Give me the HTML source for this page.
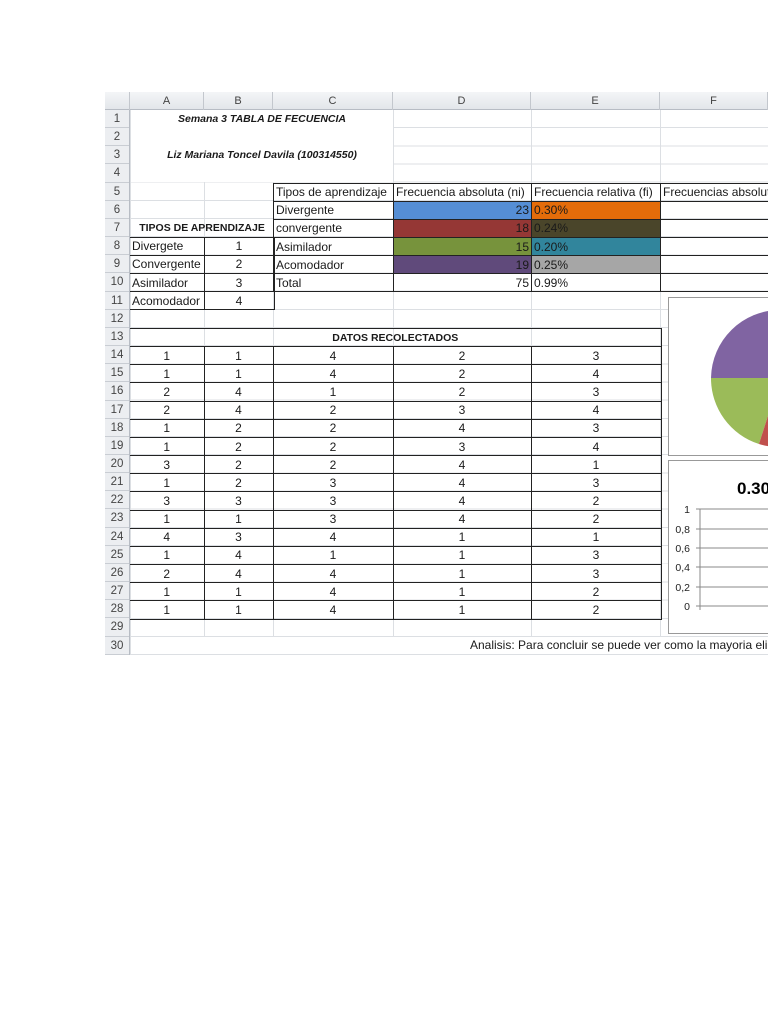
<!DOCTYPE html>
<html><head><meta charset="utf-8"><style>
*{margin:0;padding:0;box-sizing:border-box}
body{width:768px;height:1024px;background:#fff;position:relative;overflow:hidden;font-family:"Liberation Sans",sans-serif;font-size:12px;color:#1a1a1a}
.abs{position:absolute}
#sheet{position:absolute;left:105px;top:92px;width:663px;height:563px;overflow:hidden;
background:
repeating-linear-gradient(to bottom,transparent 0,transparent 17.17px,#dcdfe3 17.17px,#dcdfe3 18.17px) 0 18px/100% 545px no-repeat,#fff}
.vl{position:absolute;top:0;width:1px;height:563px;background:#dcdfe3}
#hdr{position:absolute;left:0;top:0;width:663px;height:18px;background:linear-gradient(#f4f5f7,#e3e6ea);border-bottom:1px solid #b7bcc4;font-size:11px}
#hdr div{position:absolute;top:0;height:18px;line-height:18px;text-align:center;color:#444;border-right:1px solid #c3c7cd}
#rh{position:absolute;left:0;top:18px;width:25px;background:#eceef1;border-right:1px solid #b7bcc4}
#rh div{height:18.17px;line-height:18px;text-align:center;color:#444;border-bottom:1px solid #c9cdd3;font-size:11.5px}
.t{position:absolute;height:18.17px;line-height:18px;white-space:nowrap}
table{border-collapse:collapse;table-layout:fixed;position:absolute}
td{height:18.17px;padding:0 2px;border:1px solid #222;white-space:nowrap;line-height:16px;overflow:hidden}
.c{text-align:center}.r{text-align:right}.b{font-weight:bold;font-size:10.5px}
</style></head><body>
<div id="sheet">
<div class="vl" style="left:25px"></div><div class="vl" style="left:99px"></div><div class="vl" style="left:168px"></div><div class="vl" style="left:288px"></div><div class="vl" style="left:426px"></div><div class="vl" style="left:555px"></div>
<div id="hdr">
<div style="left:0;width:25px"></div><div style="left:25px;width:74px">A</div><div style="left:99px;width:69px">B</div><div style="left:168px;width:120px">C</div><div style="left:288px;width:138px">D</div><div style="left:426px;width:129px">E</div><div style="left:555px;width:108px">F</div>
</div>
<div id="rh"><div>1</div><div>2</div><div>3</div><div>4</div><div>5</div><div>6</div><div>7</div><div>8</div><div>9</div><div>10</div><div>11</div><div>12</div><div>13</div><div>14</div><div>15</div><div>16</div><div>17</div><div>18</div><div>19</div><div>20</div><div>21</div><div>22</div><div>23</div><div>24</div><div>25</div><div>26</div><div>27</div><div>28</div><div>29</div><div>30</div></div>
<div class="abs" style="left:26px;top:18px;width:262px;height:72px;background:#fff"></div>
<div class="t b" style="left:26px;top:18px;width:262px;text-align:center;font-style:italic">Semana 3 TABLA DE FECUENCIA</div>
<div class="t b" style="left:26px;top:54px;width:262px;text-align:center;font-style:italic">Liz Mariana Toncel Davila (100314550)</div>

<table style="left:168px;top:90.5px;width:496px">
<colgroup><col style="width:120px"><col style="width:138px"><col style="width:129px"><col style="width:109px"></colgroup>
<tr><td>Tipos de aprendizaje</td><td>Frecuencia absoluta (ni)</td><td>Frecuencia relativa (fi)</td><td>Frecuencias absolut</td></tr>
<tr><td>Divergente</td><td class="r" style="background:#558ed5">23</td><td style="background:#e46c0a">0.30%</td><td></td></tr>
<tr><td>convergente</td><td class="r" style="background:#953735">18</td><td style="background:#4a452a">0.24%</td><td></td></tr>
<tr><td>Asimilador</td><td class="r" style="background:#77933c">15</td><td style="background:#31859c">0.20%</td><td></td></tr>
<tr><td>Acomodador</td><td class="r" style="background:#604a7b">19</td><td style="background:#a6a6a6">0.25%</td><td></td></tr>
<tr><td>Total</td><td class="r">75</td><td>0.99%</td><td></td></tr>
</table>

<table style="left:25px;top:127px;width:144px">
<colgroup><col style="width:74px"><col style="width:70px"></colgroup>
<tr><td colspan="2" class="c b" style="border-left:none;border-right:none;border-top:none">TIPOS DE APRENDIZAJE</td></tr>
<tr><td style="border-left:none">Divergete</td><td class="c">1</td></tr>
<tr><td style="border-left:none">Convergente</td><td class="c">2</td></tr>
<tr><td style="border-left:none">Asimilador</td><td class="c">3</td></tr>
<tr><td style="border-left:none">Acomodador</td><td class="c">4</td></tr>
</table>

<table style="left:25px;top:236px;width:531px">
<colgroup><col style="width:74px"><col style="width:69px"><col style="width:120px"><col style="width:138px"><col style="width:130px"></colgroup>
<tr><td colspan="5" class="c b" style="border-left:none">DATOS RECOLECTADOS</td></tr>
<tr><td class="c" style="border-left:none">1</td><td class="c">1</td><td class="c">4</td><td class="c">2</td><td class="c">3</td></tr>
<tr><td class="c" style="border-left:none">1</td><td class="c">1</td><td class="c">4</td><td class="c">2</td><td class="c">4</td></tr>
<tr><td class="c" style="border-left:none">2</td><td class="c">4</td><td class="c">1</td><td class="c">2</td><td class="c">3</td></tr>
<tr><td class="c" style="border-left:none">2</td><td class="c">4</td><td class="c">2</td><td class="c">3</td><td class="c">4</td></tr>
<tr><td class="c" style="border-left:none">1</td><td class="c">2</td><td class="c">2</td><td class="c">4</td><td class="c">3</td></tr>
<tr><td class="c" style="border-left:none">1</td><td class="c">2</td><td class="c">2</td><td class="c">3</td><td class="c">4</td></tr>
<tr><td class="c" style="border-left:none">3</td><td class="c">2</td><td class="c">2</td><td class="c">4</td><td class="c">1</td></tr>
<tr><td class="c" style="border-left:none">1</td><td class="c">2</td><td class="c">3</td><td class="c">4</td><td class="c">3</td></tr>
<tr><td class="c" style="border-left:none">3</td><td class="c">3</td><td class="c">3</td><td class="c">4</td><td class="c">2</td></tr>
<tr><td class="c" style="border-left:none">1</td><td class="c">1</td><td class="c">3</td><td class="c">4</td><td class="c">2</td></tr>
<tr><td class="c" style="border-left:none">4</td><td class="c">3</td><td class="c">4</td><td class="c">1</td><td class="c">1</td></tr>
<tr><td class="c" style="border-left:none">1</td><td class="c">4</td><td class="c">1</td><td class="c">1</td><td class="c">3</td></tr>
<tr><td class="c" style="border-left:none">2</td><td class="c">4</td><td class="c">4</td><td class="c">1</td><td class="c">3</td></tr>
<tr><td class="c" style="border-left:none">1</td><td class="c">1</td><td class="c">4</td><td class="c">1</td><td class="c">2</td></tr>
<tr><td class="c" style="border-left:none">1</td><td class="c">1</td><td class="c">4</td><td class="c">1</td><td class="c">2</td></tr>
</table>

<div class="abs" style="left:26px;top:545px;width:637px;height:17px;background:#fff"></div>
<div class="t" style="left:365px;top:544px">Analisis: Para concluir se puede ver como la mayoria eli</div>

<svg class="abs" style="left:563px;top:205px" width="100" height="340">
<rect x="0.5" y="0.5" width="110" height="158" fill="#fff" stroke="#999"/>
<path d="M112 81 L112 13 A69 69 0 0 0 43 81 Z" fill="#8064a2"/>
<path d="M112 81 L43 81 A69 69 0 0 0 91 147 Z" fill="#9bbb59"/>
<path d="M112 81 L91 147 A69 69 0 0 0 112 150 Z" fill="#c0504d"/>
<rect x="0.5" y="163.5" width="110" height="173" fill="#fff" stroke="#999"/>
<text x="69" y="197" font-family="Liberation Sans" font-weight="bold" font-size="17" fill="#000">0.30</text>
<g stroke="#888" stroke-width="1">
<line x1="32" y1="212" x2="32" y2="313"/>
<line x1="28" y1="212" x2="100" y2="212"/><line x1="28" y1="232" x2="100" y2="232"/><line x1="28" y1="251" x2="100" y2="251"/><line x1="28" y1="270" x2="100" y2="270"/><line x1="28" y1="290" x2="100" y2="290"/><line x1="28" y1="309" x2="100" y2="309"/>
</g>
<g font-family="Liberation Sans" font-size="10.5" fill="#222" text-anchor="end">
<text x="22" y="216">1</text><text x="22" y="236">0,8</text><text x="22" y="255">0,6</text><text x="22" y="274">0,4</text><text x="22" y="294">0,2</text><text x="22" y="313">0</text>
</g>
</svg>
</div>
</body></html>
